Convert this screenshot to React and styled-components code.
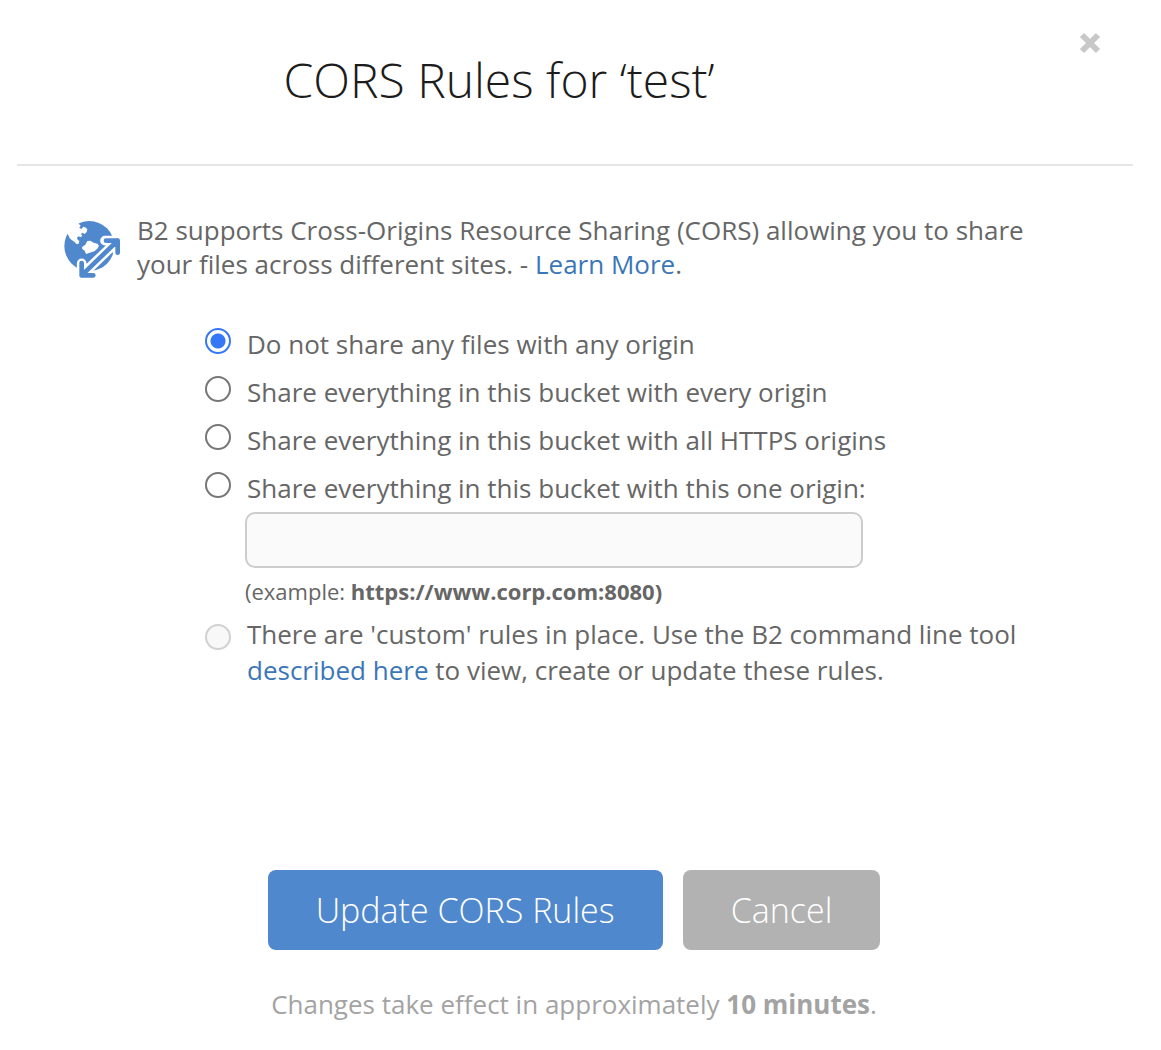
import React, { useState } from 'react';
import styled, { createGlobalStyle } from 'styled-components';

const options = [
  { value: 'none', text: 'Do not share any files with any origin' },
  { value: 'all', text: 'Share everything in this bucket with every origin' },
  { value: 'https', text: 'Share everything in this bucket with all HTTPS origins' },
  { value: 'one', text: 'Share everything in this bucket with this one origin:' },
];

const GlobeIcon = () => (
  <GlobeSvg viewBox="42 48 168 171" aria-hidden="true">
    <circle cx="118" cy="123" r="75" fill="#5088ce" />
    <path
      d="M48 82 L80 50 L87 57 L92 62 L88 68 L94 72 L100 65 L108 68 L112 73 L110 81 L104 87 L97 83 L93 87 L97 92 L92 97 L86 94 L81 98 L83 104 L88 108 L86 116 L80 118 L74 111 L66 106 L59 100 L55 90 Z"
      fill="#fff"
    />
    <path
      d="M96 126 L106 119 L112 108 L121 107 L131 113 L142 116 L147 122 L142 131 L133 139 L119 143 L108 147 L104 137 L97 132 Z"
      fill="#fff"
    />
    <g fill="none" strokeLinecap="round" strokeLinejoin="round">
      <path d="M165 107 H203 V142 M95 175 V211 H129 M203 107 L95 211" stroke="#fff" strokeWidth="29" />
      <path d="M168 107 H203 V143 M95 174 V211 H130 M203 107 L95 211" stroke="#5088ce" strokeWidth="14" />
    </g>
  </GlobeSvg>
);

const App = () => {
  const [rule, setRule] = useState('none');
  const [origin, setOrigin] = useState('');

  return (
    <Modal>
      <GlobalStyle />
      <Header>
        <Title>CORS Rules for ‘test’</Title>
        <CloseButton type="button" aria-label="Close">
          <svg width="22" height="22" viewBox="0 0 22 22">
            <path d="M3 3 L19 19 M19 3 L3 19" stroke="#c8c8c8" strokeWidth="6" />
          </svg>
        </CloseButton>
      </Header>

      <Intro>
        <GlobeIcon />
        <IntroText>
          B2 supports Cross-Origins Resource Sharing (CORS) allowing you to share your files across
          different sites. - <Link href="#learn-more">Learn More</Link>.
        </IntroText>
      </Intro>

      <Options>
        {options.map((option) => (
          <Option key={option.value}>
            <Radio
              id={`rule-${option.value}`}
              name="rule"
              value={option.value}
              checked={rule === option.value}
              onChange={() => setRule(option.value)}
            />
            <OptionLabel htmlFor={`rule-${option.value}`}>{option.text}</OptionLabel>
          </Option>
        ))}
        <OriginField>
          <OriginInput
            type="text"
            aria-label="Origin"
            value={origin}
            onChange={(e) => setOrigin(e.target.value)}
          />
          <Example>
            (example: <strong>https://www.corp.com:8080)</strong>
          </Example>
        </OriginField>
        <Option>
          <Radio id="rule-custom" name="rule" value="custom" disabled />
          <OptionLabel htmlFor="rule-custom" $multiline>
            There are 'custom' rules in place. Use the B2 command line tool{' '}
            <Link href="#described-here">described here</Link> to view, create or update these rules.
          </OptionLabel>
        </Option>
      </Options>

      <Footer>
        <Actions>
          <Button type="button" $primary>Update CORS Rules</Button>
          <Button type="button">Cancel</Button>
        </Actions>
        <Note>
          Changes take effect in approximately <strong>10 minutes</strong>.
        </Note>
      </Footer>
    </Modal>
  );
};

const GlobalStyle = createGlobalStyle`
  * {
    box-sizing: border-box;
  }

  body {
    margin: 0;
    background-color: #fff;
    color: #666;
    font-family: 'Open Sans', sans-serif;
    font-size: 26px;
  }
`;

const Modal = styled.main`
  padding: 0 28px 24px 17px;
`;

const Header = styled.header`
  display: flex;
  align-items: flex-start;
  height: 166px;
  padding: 32px 32px 0 0;
  border-bottom: 2px solid #e5e5e5;
`;

const Title = styled.h1`
  flex: 1;
  margin: 16px 98px 0 0;
  color: #1c1c1c;
  font-size: 48px;
  font-weight: 300;
  line-height: 64px;
  text-align: center;
`;

const CloseButton = styled.button`
  display: flex;
  padding: 0;
  border: none;
  background: none;
  cursor: pointer;
`;

const Intro = styled.section`
  display: flex;
  align-items: flex-start;
  gap: 17px;
  padding: 47px 48px 0 47px;
`;

const GlobeSvg = styled.svg`
  flex: none;
  width: 56px;
  height: 57px;
  margin-top: 8px;
`;

const IntroText = styled.p`
  margin: 0;
  line-height: 34px;
`;

const Link = styled.a`
  color: #3b76b9;
  text-decoration: none;
`;

const Options = styled.section`
  padding: 39px 64px 0 188px;
`;

const Option = styled.div`
  display: flex;
  align-items: flex-start;
  gap: 16px;
`;

const Radio = styled.input.attrs({ type: 'radio' })`
  appearance: none;
  flex: none;
  width: 26px;
  height: 26px;
  margin: 8px 0 0;
  border: 2px solid #767676;
  border-radius: 50%;
  background-color: #fff;

  &:checked {
    border-color: #3478f6;
    background: radial-gradient(circle, #3478f6 7px, #fff 8px);
  }

  &:disabled {
    border-color: #d1d1d1;
    background-color: #f8f8f8;
  }
`;

const OptionLabel = styled.label`
  line-height: ${({ $multiline }) => ($multiline ? '36px' : '48px')};
`;

const OriginField = styled.div`
  padding-left: 40px;
`;

const OriginInput = styled.input`
  display: block;
  width: 100%;
  max-width: 618px;
  height: 56px;
  padding: 0 16px;
  border: 2px solid #ccc;
  border-radius: 10px;
  background-color: #fafafa;
  color: #666;
  font: inherit;
`;

const Example = styled.p`
  margin: 0 0 2px;
  font-size: 22px;
  line-height: 46px;
`;

const Footer = styled.footer`
  padding: 182px 2px 0 0;
`;

const Actions = styled.div`
  display: flex;
  justify-content: center;
  gap: 20px;
`;

const Button = styled.button`
  height: 80px;
  padding: 0 48px;
  border: none;
  border-radius: 8px;
  background-color: ${({ $primary }) => ($primary ? '#5088ce' : '#b2b2b2')};
  color: #fff;
  font-family: inherit;
  font-size: 34px;
  font-weight: 300;
  cursor: pointer;
`;

const Note = styled.p`
  margin: 36px 0 0;
  color: #a3a3a3;
  line-height: 36px;
  text-align: center;
`;

export default App;
